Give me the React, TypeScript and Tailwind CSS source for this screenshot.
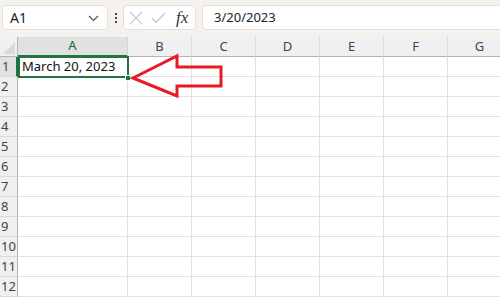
import React from 'react';

const cols = ['A', 'B', 'C', 'D', 'E', 'F', 'G'];
const rows = Array.from({ length: 12 }, (_, i) => i + 1);

const App: React.FC = () => {
  return (
    <div className="w-[500px] h-[298px] overflow-hidden bg-white font-['Noto_Sans',sans-serif] relative">
      {/* formula bar */}
      <div className="h-[37px] bg-[#f5f1ec] flex items-start pt-[5px] pl-[2px] gap-[3px]">
        <div className="w-[106px] h-[25px] bg-white border border-[#e3ded8] rounded-[4px] flex items-center justify-between pl-[7px] pr-[8px]">
          <span className="text-[14px] text-[#222]">A1</span>
          <svg width="11" height="7" viewBox="0 0 11 7" className="mt-[1px]">
            <path d="M1 1 L5.5 5.5 L10 1" fill="none" stroke="#555" strokeWidth="1.2" />
          </svg>
        </div>
        <div className="w-[9px] h-[25px] flex flex-col items-center justify-center gap-[2px]">
          <div className="w-[2px] h-[2px] bg-[#444]" />
          <div className="w-[2px] h-[2px] bg-[#444]" />
          <div className="w-[2px] h-[2px] bg-[#444]" />
        </div>
        <div className="w-[73px] h-[25px] bg-white border border-[#e3ded8] rounded-[4px] flex items-center pl-[5px] gap-[8px]">
          <svg width="14" height="14" viewBox="0 0 14 14">
            <path d="M1 1 L13 13 M13 1 L1 13" stroke="#c6c6c6" strokeWidth="1.2" />
          </svg>
          <svg width="15" height="12" viewBox="0 0 15 12">
            <path d="M1 6 L5 10.5 L14 1" fill="none" stroke="#c6c6c6" strokeWidth="1.2" />
          </svg>
          <span className="text-[17px] leading-none italic font-['Liberation_Serif',serif] text-[#333] ml-[2px]">fx</span>
        </div>
        <div className="flex-1 ml-[3px] h-[25px] bg-white border border-[#e3ded8] rounded-l-[4px] border-r-0 flex items-center pl-[11px]">
          <span className="text-[13px] text-[#222]">3/20/2023</span>
        </div>
      </div>

      {/* grid */}
      <div className="grid grid-cols-[18px_110px_64px_64px_64px_64px_64px_64px] auto-rows-[20px]">
        <div className="bg-[#f0f0f0] border-r border-b border-[#b4b4b4] relative">
          <div className="absolute right-[2px] bottom-[2px] w-0 h-0 border-l-[12px] border-l-transparent border-b-[12px] border-b-[#dadada]" />
        </div>
        {cols.map((c) => (
          <div
            key={c}
            className={
              c === 'A'
                ? 'bg-[#e1e1e1] border-r border-[#d4d4d4] border-b-2 border-b-[#217346] flex items-center justify-center text-[13px] text-[#1c5e3a]'
                : 'bg-[#f0f0f0] border-r border-[#dadada] border-b border-b-[#b4b4b4] flex items-center justify-center text-[13px] text-[#444]'
            }
          >
            {c}
          </div>
        ))}
        {rows.map((r) => (
          <React.Fragment key={r}>
            <div
              className={
                r === 1
                  ? 'bg-[#e1e1e1] border-r-2 border-r-[#217346] border-b border-b-[#dadada] flex items-center pl-[2px] text-[13px] text-[#1c5e3a]'
                  : 'bg-[#f0f0f0] border-r border-r-[#b4b4b4] border-b border-b-[#dadada] flex items-center pl-[1px] text-[13px] text-[#444]'
              }
            >
              {r}
            </div>
            {cols.map((c) => (
              <div key={c} className="border-r border-b border-[#e1e1e1] flex items-center pl-[4px] text-[13px] text-[#111] whitespace-nowrap">
                {r === 1 && c === 'A' ? 'March 20, 2023' : ''}
              </div>
            ))}
          </React.Fragment>
        ))}
      </div>

      {/* selection */}
      <div className="absolute left-[18px] top-[56px] w-[111px] h-[22px] border-2 border-[#217346] pointer-events-none" />
      <div className="absolute left-[125px] top-[75px] w-[6px] h-[6px] bg-[#217346] border border-white" />

      {/* arrow */}
      <svg className="absolute left-0 top-0" width="500" height="298" viewBox="0 0 500 298">
        <polygon points="133,78 177,56 177,67 221,67 221,86 177,86 177,96" fill="none" stroke="#e81a24" strokeWidth="3" strokeLinejoin="miter" />
      </svg>
    </div>
  );
};

export default App;
